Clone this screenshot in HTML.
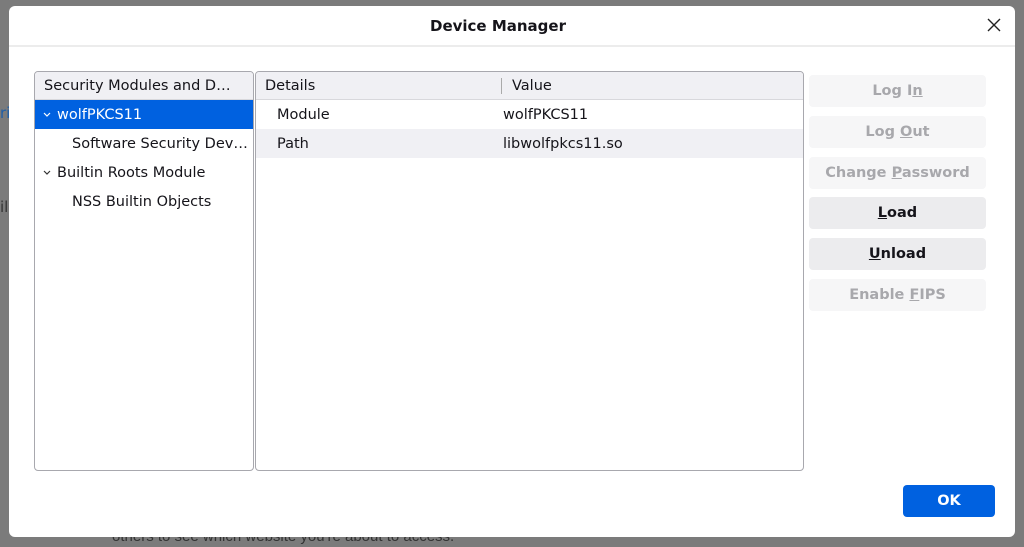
<!DOCTYPE html>
<html><head><meta charset="utf-8"><style>
*{box-sizing:border-box;margin:0;padding:0}
body{width:1024px;height:547px;background:#7b7b7b;position:relative;overflow:hidden;font-family:"DejaVu Sans","Liberation Sans",sans-serif;font-size:14.5px;color:#15141a}
.a{position:absolute}
.dlg{left:9px;top:6px;width:1006px;height:531px;background:#fff;border-radius:6px}
.title{left:0;top:0;width:978px;text-align:center;line-height:40px;font-weight:bold;font-size:15px;border-bottom:2px solid #ececec;height:41px}
.tl{left:0;top:39px;width:1006px;height:2px;background:#ececec}
.box{border:1px solid #a8a8ae;border-radius:4px;background:#fff;overflow:hidden}
.hdr{position:absolute;left:0;top:0;right:0;height:28px;background:#f0f0f4;border-bottom:1px solid #d8d8dc;line-height:29px}
.row{position:absolute;left:0;right:0;height:29px;line-height:31px;white-space:nowrap}
.btn{position:absolute;left:800px;width:177px;height:32px;border-radius:4px;background:#f6f6f7;color:#a8a8ac;font-weight:bold;text-align:center;line-height:32px;font-size:14.5px}
.btn.en{background:#ececee;color:#15141a}
u{text-decoration:underline}
.chev{position:absolute;left:8px;top:12px}
</style></head><body>
<div class="a" style="left:0;top:104px;color:#1f5fa8;font-size:15px">ri</div>
<div class="a" style="left:0;top:198px;color:#333;font-size:15px">il</div>
<div class="a" style="left:112px;top:528px;color:#333;font-size:15px;font-family:'Liberation Sans',sans-serif">others to see which website you're about to access.</div>
<div class="a dlg">
 <div class="a title" style="border:none">Device Manager</div>
 <div class="a tl"></div>
 <svg class="a" style="left:978px;top:12px" width="14" height="14"><path d="M1 1L13 13M13 1L1 13" stroke="#222" stroke-width="1.4"/></svg>
 <div class="a box" style="left:25px;top:65px;width:220px;height:400px">
  <div class="hdr" style="padding-left:9px">Security Modules and D…</div>
  <div class="row" style="top:28px;background:#0061e0;color:#fff;padding-left:22px"><svg class="chev" width="8" height="6"><path d="M1 1L4 4L7 1" stroke="#fff" stroke-width="1.2" fill="none"/></svg>wolfPKCS11</div>
  <div class="row" style="top:57px;padding-left:37px">Software Security Dev…</div>
  <div class="row" style="top:86px;padding-left:22px"><svg class="chev" width="8" height="6"><path d="M1 1L4 4L7 1" stroke="#333" stroke-width="1.2" fill="none"/></svg>Builtin Roots Module</div>
  <div class="row" style="top:115px;padding-left:37px">NSS Builtin Objects</div>
 </div>
 <div class="a box" style="left:246px;top:65px;width:549px;height:400px">
  <div class="hdr"><span class="a" style="left:9px">Details</span><span class="a" style="left:245px;top:6px;width:1px;height:16px;background:#aaa"></span><span class="a" style="left:256px">Value</span></div>
  <div class="row" style="top:28px"><span class="a" style="left:21px">Module</span><span class="a" style="left:247px">wolfPKCS11</span></div>
  <div class="row" style="top:57px;background:#f0f0f4"><span class="a" style="left:21px">Path</span><span class="a" style="left:247px">libwolfpkcs11.so</span></div>
 </div>
 <div class="btn" style="top:69px">Log I<u>n</u></div>
 <div class="btn" style="top:110px">Log <u>O</u>ut</div>
 <div class="btn" style="top:151px">Change <u>P</u>assword</div>
 <div class="btn en" style="top:191px"><u>L</u>oad</div>
 <div class="btn en" style="top:232px"><u>U</u>nload</div>
 <div class="btn" style="top:273px">Enable <u>F</u>IPS</div>
 <div class="a" style="left:894px;top:479px;width:92px;height:32px;background:#0061e0;border-radius:4px;color:#fff;font-weight:bold;text-align:center;line-height:32px">OK</div>
</div>
</body></html>
